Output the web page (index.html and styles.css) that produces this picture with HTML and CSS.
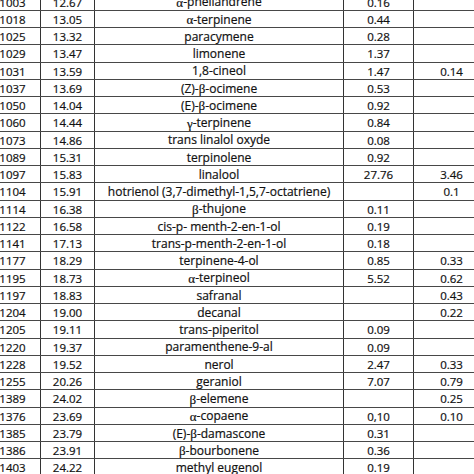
FILE: index.html
```html
<!DOCTYPE html>
<html>
<head>
<meta charset="utf-8">
<link rel="stylesheet" href="styles.css">
</head>
<body>
<div class="table">
  <div class="row"><div class="c">1003</div><div class="c">12.67</div><div class="c n"><span class="g">α</span>-phellandrene</div><div class="c">0.16</div><div class="c"></div></div>
  <div class="row"><div class="c">1018</div><div class="c">13.05</div><div class="c n"><span class="g">α</span>-terpinene</div><div class="c">0.44</div><div class="c"></div></div>
  <div class="row"><div class="c">1025</div><div class="c">13.32</div><div class="c n">paracymene</div><div class="c">0.28</div><div class="c"></div></div>
  <div class="row"><div class="c">1029</div><div class="c">13.47</div><div class="c n">limonene</div><div class="c">1.37</div><div class="c"></div></div>
  <div class="row"><div class="c">1031</div><div class="c">13.59</div><div class="c n">1,8-cineol</div><div class="c">1.47</div><div class="c">0.14</div></div>
  <div class="row"><div class="c">1037</div><div class="c">13.69</div><div class="c n">(Z)-<span class="g">β</span>-ocimene</div><div class="c">0.53</div><div class="c"></div></div>
  <div class="row"><div class="c">1050</div><div class="c">14.04</div><div class="c n">(E)-<span class="g">β</span>-ocimene</div><div class="c">0.92</div><div class="c"></div></div>
  <div class="row"><div class="c">1060</div><div class="c">14.44</div><div class="c n"><span class="g">γ</span>-terpinene</div><div class="c">0.84</div><div class="c"></div></div>
  <div class="row"><div class="c">1073</div><div class="c">14.86</div><div class="c n">trans linalol oxyde</div><div class="c">0.08</div><div class="c"></div></div>
  <div class="row"><div class="c">1089</div><div class="c">15.31</div><div class="c n">terpinolene</div><div class="c">0.92</div><div class="c"></div></div>
  <div class="row"><div class="c">1097</div><div class="c">15.83</div><div class="c n">linalool</div><div class="c">27.76</div><div class="c">3.46</div></div>
  <div class="row"><div class="c">1104</div><div class="c">15.91</div><div class="c n">hotrienol (3,7-dimethyl-1,5,7-octatriene)</div><div class="c"></div><div class="c">0.1</div></div>
  <div class="row"><div class="c">1114</div><div class="c">16.38</div><div class="c n"><span class="g">β</span>-thujone</div><div class="c">0.11</div><div class="c"></div></div>
  <div class="row"><div class="c">1122</div><div class="c">16.58</div><div class="c n">cis-p- menth-2-en-1-ol</div><div class="c">0.19</div><div class="c"></div></div>
  <div class="row"><div class="c">1141</div><div class="c">17.13</div><div class="c n">trans-p-menth-2-en-1-ol</div><div class="c">0.18</div><div class="c"></div></div>
  <div class="row"><div class="c">1177</div><div class="c">18.29</div><div class="c n">terpinene-4-ol</div><div class="c">0.85</div><div class="c">0.33</div></div>
  <div class="row"><div class="c">1195</div><div class="c">18.73</div><div class="c n"><span class="g">α</span>-terpineol</div><div class="c">5.52</div><div class="c">0.62</div></div>
  <div class="row"><div class="c">1197</div><div class="c">18.83</div><div class="c n">safranal</div><div class="c"></div><div class="c">0.43</div></div>
  <div class="row"><div class="c">1204</div><div class="c">19.00</div><div class="c n">decanal</div><div class="c"></div><div class="c">0.22</div></div>
  <div class="row"><div class="c">1205</div><div class="c">19.11</div><div class="c n">trans-piperitol</div><div class="c">0.09</div><div class="c"></div></div>
  <div class="row"><div class="c">1220</div><div class="c">19.37</div><div class="c n">paramenthene-9-al</div><div class="c">0.09</div><div class="c"></div></div>
  <div class="row"><div class="c">1228</div><div class="c">19.52</div><div class="c n">nerol</div><div class="c">2.47</div><div class="c">0.33</div></div>
  <div class="row"><div class="c">1255</div><div class="c">20.26</div><div class="c n">geraniol</div><div class="c">7.07</div><div class="c">0.79</div></div>
  <div class="row"><div class="c">1389</div><div class="c">24.02</div><div class="c n"><span class="g">β</span>-elemene</div><div class="c"></div><div class="c">0.25</div></div>
  <div class="row"><div class="c">1376</div><div class="c">23.69</div><div class="c n"><span class="g">α</span>-copaene</div><div class="c">0,10</div><div class="c">0.10</div></div>
  <div class="row"><div class="c">1385</div><div class="c">23.79</div><div class="c n">(E)-<span class="g">β</span>-damascone</div><div class="c">0.31</div><div class="c"></div></div>
  <div class="row"><div class="c">1386</div><div class="c">23.91</div><div class="c n"><span class="g">β</span>-bourbonene</div><div class="c">0.36</div><div class="c"></div></div>
  <div class="row"><div class="c">1403</div><div class="c">24.22</div><div class="c n">methyl eugenol</div><div class="c">0.19</div><div class="c"></div></div>
</div>
</body>
</html>
```
FILE: styles.css
```css
html, body {
  margin: 0;
  padding: 0;
  background: #ffffff;
  overflow: hidden;
}
body {
  width: 474px;
  height: 474px;
  font-family: "Open Sans", Lato, sans-serif;
  font-size: 11.5px;
  color: #111111;
  -webkit-text-stroke: 0.2px #111111;
}
.table {
  margin-top: -6.3px;
  margin-left: -15px;
  width: 520px;
}
.row {
  display: grid;
  grid-template-columns: 56px 54px 249px 70px 76px;
  height: 17.26px;
  box-sizing: border-box;
  border-bottom: 1.3px solid #484848;
}
.c {
  display: flex;
  align-items: center;
  justify-content: center;
  white-space: nowrap;
  border-right: 1.3px solid #333333;
  box-sizing: border-box;
  line-height: 1;
  padding-top: 1px;
}
.n {
  font-size: 12px;
}
.g {
  font-family: "Liberation Serif", serif;
  font-size: 13px;
}
```
